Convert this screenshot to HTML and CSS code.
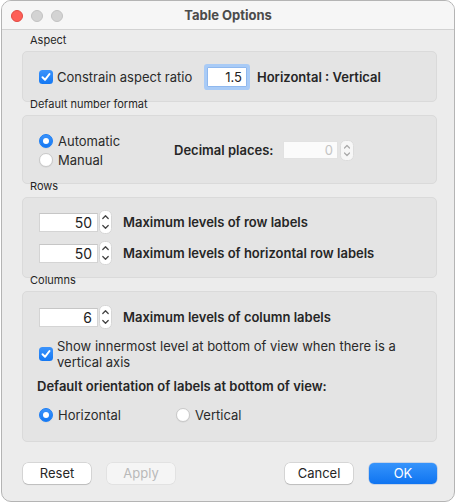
FILE: index.html
```html
<!DOCTYPE html>
<html>
<head>
<meta charset="utf-8">
<link rel="stylesheet" href="styles.css">
</head>
<body>
<div class="window">
  <div class="titlebar">
    <div class="lights">
      <span class="light red"></span>
      <span class="light grey"></span>
      <span class="light grey"></span>
    </div>
    <div class="title">Table Options</div>
  </div>
  <div class="content">
    <div class="section first">
      <div class="sec-label">Aspect</div>
      <div class="group g-aspect">
        <label class="check-row aspect-check">
          <span class="checkbox"><svg viewBox="0 0 14 14" width="14" height="14"><path d="M3.5 7.3 L6 9.8 L10.5 4" fill="none" stroke="#fff" stroke-width="2" stroke-linecap="round" stroke-linejoin="round"/></svg></span>
          <span class="txt">Constrain aspect ratio</span>
        </label>
        <div class="field focused ratio">1.5</div>
        <span class="bold hv">Horizontal : Vertical</span>
      </div>
    </div>

    <div class="section">
      <div class="sec-label">Default number format</div>
      <div class="group g-format">
        <div class="radio-col">
          <div class="radio-row"><span class="radio on"></span><span class="txt">Automatic</span></div>
          <div class="radio-row"><span class="radio"></span><span class="txt">Manual</span></div>
        </div>
        <span class="bold dec-label">Decimal places:</span>
        <div class="field disabled dec">0</div>
        <span class="stepper dis"><svg viewBox="0 0 14 21" width="14" height="21"><rect x="0.5" y="0.5" width="13" height="20" rx="5" fill="#f7f7f7" stroke="#dcdcdc"/><path d="M4.5 8 L7 5.5 L9.5 8" fill="none" stroke="#a9a9a9" stroke-width="1.2" stroke-linecap="round" stroke-linejoin="round"/><path d="M4.5 13 L7 15.5 L9.5 13" fill="none" stroke="#a9a9a9" stroke-width="1.2" stroke-linecap="round" stroke-linejoin="round"/></svg></span>
      </div>
    </div>

    <div class="section">
      <div class="sec-label">Rows</div>
      <div class="group g-rows">
        <div class="num-row">
          <div class="field num">50</div>
          <span class="stepper"><svg viewBox="0 0 13 24" width="13" height="24"><rect x="0.5" y="0.5" width="12" height="23" rx="5" fill="#fff" stroke="#d6d6d6"/><path d="M3.8 8.5 L6.5 5.8 L9.2 8.5" fill="none" stroke="#444" stroke-width="1.3" stroke-linecap="round" stroke-linejoin="round"/><path d="M3.8 15.5 L6.5 18.2 L9.2 15.5" fill="none" stroke="#444" stroke-width="1.3" stroke-linecap="round" stroke-linejoin="round"/></svg></span>
          <span class="bold num-label">Maximum levels of row labels</span>
        </div>
        <div class="num-row second">
          <div class="field num">50</div>
          <span class="stepper"><svg viewBox="0 0 13 24" width="13" height="24"><rect x="0.5" y="0.5" width="12" height="23" rx="5" fill="#fff" stroke="#d6d6d6"/><path d="M3.8 8.5 L6.5 5.8 L9.2 8.5" fill="none" stroke="#444" stroke-width="1.3" stroke-linecap="round" stroke-linejoin="round"/><path d="M3.8 15.5 L6.5 18.2 L9.2 15.5" fill="none" stroke="#444" stroke-width="1.3" stroke-linecap="round" stroke-linejoin="round"/></svg></span>
          <span class="bold num-label">Maximum levels of horizontal row labels</span>
        </div>
      </div>
    </div>

    <div class="section">
      <div class="sec-label">Columns</div>
      <div class="group g-cols">
        <div class="num-row">
          <div class="field num">6</div>
          <span class="stepper"><svg viewBox="0 0 13 24" width="13" height="24"><rect x="0.5" y="0.5" width="12" height="23" rx="5" fill="#fff" stroke="#d6d6d6"/><path d="M3.8 8.5 L6.5 5.8 L9.2 8.5" fill="none" stroke="#444" stroke-width="1.3" stroke-linecap="round" stroke-linejoin="round"/><path d="M3.8 15.5 L6.5 18.2 L9.2 15.5" fill="none" stroke="#444" stroke-width="1.3" stroke-linecap="round" stroke-linejoin="round"/></svg></span>
          <span class="bold num-label">Maximum levels of column labels</span>
        </div>
        <label class="check-row multi">
          <span class="checkbox"><svg viewBox="0 0 14 14" width="14" height="14"><path d="M3.5 7.3 L6 9.8 L10.5 4" fill="none" stroke="#fff" stroke-width="2" stroke-linecap="round" stroke-linejoin="round"/></svg></span>
          <span class="txt">Show innermost level at bottom of view when there is a<br>vertical axis</span>
        </label>
        <div class="bold orient">Default orientation of labels at bottom of view:</div>
        <div class="orient-radios">
          <div class="radio-row w-h"><span class="radio on"></span><span class="txt">Horizontal</span></div>
          <div class="radio-row"><span class="radio"></span><span class="txt">Vertical</span></div>
        </div>
      </div>
    </div>

    <div class="buttons">
      <div class="btn-group">
        <button class="btn">Reset</button>
        <button class="btn disabled">Apply</button>
      </div>
      <div class="btn-group">
        <button class="btn">Cancel</button>
        <button class="btn primary">OK</button>
      </div>
    </div>
  </div>
</div>
</body>
</html>
```

FILE: styles.css
```css
* { box-sizing: border-box; }
html, body { margin: 0; padding: 0; }
body {
  background: #ffffff;
  font-family: "Inter", "Liberation Sans", sans-serif;
  color: #2a2a2a;
  width: 458px;
  height: 504px;
  overflow: hidden;
}
.window {
  width: 454px;
  height: 502px;
  margin-left: 1px;
  border: 1px solid #b4b4b4;
  border-radius: 10px;
  background: #ececec;
  overflow: hidden;
}
.titlebar {
  height: 29px;
  background: #f6f6f6;
  border-bottom: 1px solid #d2d2d2;
  display: flex;
  align-items: center;
  position: relative;
}
.lights {
  display: flex;
  gap: 8px;
  padding-left: 9px;
  margin-top: 1px;
}
.light {
  width: 12px;
  height: 12px;
  border-radius: 50%;
  display: block;
}
.light.red { background: #fe5f57; border: 0.5px solid #e14942; }
.light.grey { background: #d3d3d3; border: 0.5px solid #c2c2c2; }
.title {
  position: absolute;
  left: 0; right: 0;
  top: 0;
  line-height: 29px;
  text-align: center;
  font-size: 13px;
  font-weight: 700;
  color: #4b4b4b;
  pointer-events: none;
}
.content {
  padding: 4px 17px 0 20px;
}
.sec-label {
  font-size: 11px;
  line-height: 13px;
  padding-left: 8px;
  margin-bottom: 4px;
  color: #262626;
}
.section + .section { margin-top: -4px; }
.group {
  width: 415px;
  background: #e4e4e4;
  border: 1px solid #dadada;
  border-radius: 5px;
}
.txt { font-size: 13px; color: #2a2a2a; }
.bold { font-size: 13px; font-weight: 600; color: #262626; }

.checkbox {
  width: 14px;
  height: 14px;
  border-radius: 3.5px;
  background: linear-gradient(#3b93fb, #1478f3);
  flex: 0 0 14px;
  display: block;
}
.checkbox svg { display: block; }
.check-row { display: flex; align-items: center; gap: 4px; }

.g-aspect {
  height: 51px;
  display: flex;
  align-items: center;
  padding-left: 16px;
  padding-top: 1px;
}
.aspect-check { flex: 0 0 168px; }
.field {
  background: #fff;
  border: 1px solid #d4d4d4;
  border-top-color: #c6c6c6;
  font-size: 13px;
  text-align: right;
  line-height: 18px;
  padding-right: 4px;
  color: #222;
}
.field.focused {
  box-shadow: 0 0 0 3px #a9cbf6;
  border-color: #8fb8ee;
  border-radius: 1px;
}
.ratio { width: 40px; height: 20px; }
.hv { margin-left: 10px; }

.g-format {
  height: 69px;
  display: flex;
  align-items: center;
  padding-left: 16px;
  padding-top: 1px;
}
.radio-col { flex: 0 0 135px; display: flex; flex-direction: column; }
.radio-row { display: flex; align-items: center; gap: 5px; height: 19px; }
.radio {
  width: 14px;
  height: 14px;
  border-radius: 50%;
  background: #fff;
  border: 1px solid #c9c9c9;
  box-shadow: 0 0.5px 1px rgba(0,0,0,0.08);
  flex: 0 0 14px;
  display: block;
  position: relative;
}
.radio.on {
  background: linear-gradient(#3b93fb, #1478f3);
  border-color: #1a7df5;
}
.radio.on::after {
  content: "";
  position: absolute;
  left: 3px; top: 3px;
  width: 6px; height: 6px;
  border-radius: 50%;
  background: #fff;
}
.dec-label { flex: 0 0 109px; }
.field.disabled {
  width: 55px;
  height: 18px;
  line-height: 16px;
  color: #c4c4c4;
  border-color: #e2e2e2;
  background: #fbfbfb;
}
.stepper { display: block; line-height: 0; }
.stepper.dis { margin-left: 2px; }

.g-rows {
  height: 81px;
  padding: 12px 0 0 16px;
}
.num-row { display: flex; align-items: center; height: 24px; }
.num-row.second { margin-top: 7px; }
.field.num { width: 59px; height: 19px; line-height: 17px; font-size: 14px; padding-right: 5px; }
.num-row .stepper { margin-left: 1px; }
.num-label { margin-left: 11px; }

.g-cols {
  height: 151px;
  padding: 13px 0 0 16px;
}
.check-row.multi { margin-top: 9px; line-height: 16px; }
.orient { margin-top: 8px; margin-left: -2px; line-height: 16px; }
.orient-radios { display: flex; margin-top: 11px; }
.orient-radios .radio-row.w-h { flex: 0 0 137px; }

.buttons {
  display: flex;
  justify-content: space-between;
  margin-top: 21px;
  padding-left: 1px;
  width: 415px;
}
.btn-group { display: flex; gap: 16px; }
.btn {
  width: 68px;
  height: 21px;
  border: none;
  border-radius: 5px;
  background: #fff;
  box-shadow: 0 0 0 0.5px rgba(0,0,0,0.18), 0 1px 1px rgba(0,0,0,0.12);
  font-family: "Inter", "Liberation Sans", sans-serif;
  font-size: 13px;
  color: #262626;
  padding: 0;
  line-height: 21px;
}
.btn.disabled {
  background: #f5f5f5;
  color: #b9b9b9;
  box-shadow: 0 0 0 0.5px rgba(0,0,0,0.08);
}
.btn.primary {
  background: linear-gradient(#3694fb, #0f74f1);
  color: #fff;
  box-shadow: 0 0 0 0.5px rgba(0,80,200,0.3);
}
```
